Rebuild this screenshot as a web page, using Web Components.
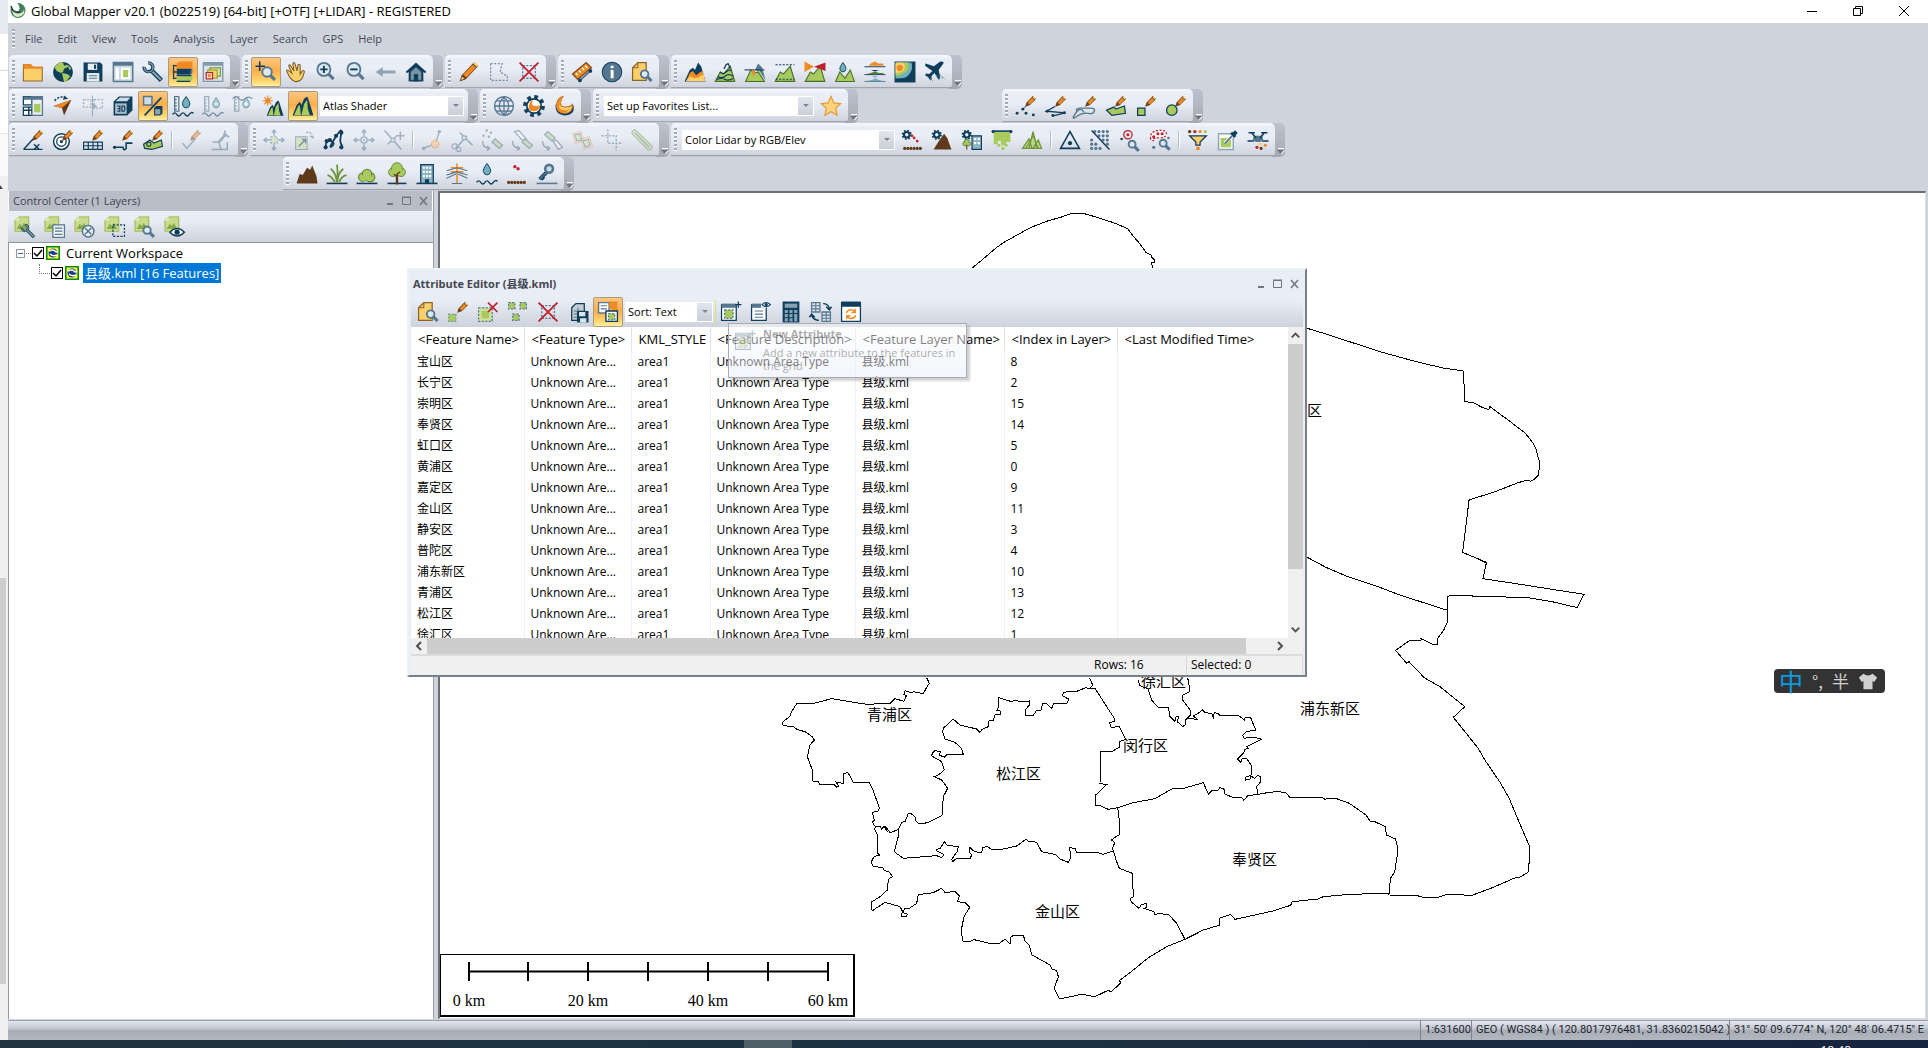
<!DOCTYPE html>
<html lang="en">
<head>
<meta charset="utf-8">
<title>Global Mapper</title>
<style>
html,body{margin:0;height:100%}
body{font-family:"Open Sans","Noto Sans CJK SC",sans-serif;font-size:13px;line-height:18px;color:#000;background:#cfd3dc;overflow:hidden}
</style>
</head>
<body>
<gm-app></gm-app>
<script>
const N='#0f3d5c',B='#55778f',G='#a9ca5c',O='#ef8a25',Y='#fbd06a',L='#cfdbe2',K='#5f3a1a',R='#c0202e',T='#6fb1bd';
const f=(d,c)=>`<path d="${d}" fill="${c}"/>`;
const s=(d,c=N,w=1.4,fill='none',x='')=>`<path d="${d}" fill="${fill}" stroke="${c}" stroke-width="${w}" ${x}/>`;
const c=(x,y,r,fill=N,st='none',w=1)=>`<circle cx="${x}" cy="${y}" r="${r}" fill="${fill}" stroke="${st}" stroke-width="${w}"/>`;
const dots=(a,fill,r=1.1)=>a.map(([x,y])=>c(x,y,r,fill)).join('');
const dash='stroke-dasharray="2 1.4"';
const pen=f('M9.2 10.8l1.3-4.2L16.4.4l3.2 3-6 6z','#70441c')+f('M11.6 6.6l4.2-4.4 2.1 2-4.2 4.4z',O)+f('M16.4 1.8l.9-.8 2 1.9-.8.9z',Y);
const mag=(x,y,r=3.4)=>s(`M${x+r*.7} ${y+r*.7}L${x+r+3} ${y+r+3}`,B,3)+c(x,y,r,'#dce9ef',B,1.8);
const gear=(x,y,r,col)=>c(x,y,r*.65,'none',col,r*.5)+`<circle cx="${x}" cy="${y}" r="${r}" fill="none" stroke="${col}" stroke-width="${r*.45}" stroke-dasharray="${r*.4} ${r*.385}"/>`;
const drop=(x,y,k=1)=>s(`M${x} ${y}q${-4*k} ${5*k} ${-3*k} ${7.5*k}a${3.1*k} ${3.1*k} 0 0 0 ${6*k} 0q${1*k} ${-2.5*k} ${-3*k} ${-7.5*k}z`,N,.9,T);
const wave=s('M0 18q2-3 4 0t4 0 4 0 4 0 4-1',N,1.3);
const ruler=s('M2 1h4v14H2zM2 4h2M2 7h2M2 10h2M2 13h2',B,1.2,'#e8eef2');
const mt=f('M0 19L4 9l3-3 1.500 3L11 3l3-2 1 2 5 16z',N)+f('M1.500 18.500L5.500 10l1.500-1 1 9.500zM8.500 18.500L11 8l3-4 1 14.500z',G)+f('M10 18.500l1.500-8 3 2 2 6z',G);
const gm=s('M.7 19l4.8-9 3 2 3.5-4 3-3.5 4.3 14.500z','#46702c',1.1,G);
const brown=f('M0 19l3-9 3 1 4-7 3 2 2-4 4 10 1 7z',K);
const grid=s('M1 12h18v7H1zM5.500 12v7M10 12v7M14.500 12v7M1 15.500h18',N,1.1);
const cross=s('M1 1l18 18M19 1L1 19',R,1.7);
const dsq=(x,y,w,fill='none',col=B)=>`<rect x="${x}" y="${y}" width="${w}" height="${w}" fill="${fill}" stroke="${col}" stroke-width="1.2" ${dash}/>`;
const page=f('M4 0h10v14H0V4z','#c9dc8d')+s('M.5 14V4l4-3.500h9V14z','#a3ba62',1)+f('M4 .5V4H.5z','#e6efc6')+f('M2 12l3-5 2 2 2-3 3 6z','#88a84a');
const tree=(x,y,k=1)=>s(`M${x} ${y+10*k}V${y}`,K,1.8*k)+c(x-3*k,y+1*k,3.2*k,G,'#55803a',.8)+c(x+3*k,y+1*k,3.2*k,G,'#55803a',.8)+c(x,y-2*k,4*k,G,'#55803a',.8)+f(`M${x-4*k} ${y-1*k}h${8*k}v${3.500*k}h${-8*k}z`,G);
const bld=s('M10 6h9v13h-9z',N,1.1,'#8db4c4')+f('M12 8h2v2h-2zM15.500 8h2v2h-2zM12 12h2v2h-2zM15.500 12h2v2h-2z','#fff');
const arr4=s('M10 1v5M10 14v5M1 10h5M14 10h5M8 3l2-2.500L12 3M8 17l2 2.500 2-2.500M3 8L.5 10 3 12M17 8l2.500 2L17 12',B,1.4);
const rot=s('M1 11q0 7 7 7M8 18l-3-2M8 18l-3 2',B,1.3);
const slab=(x,y)=>s(`M${x} ${y}l3-3 7 6-3 3z`,B,1.2,'#b9d588');
const win=s('M1 3h14v15H1z',N,1.2,'#fff')+f('M1 2h14v4H1z',B);
const doc=s('M4 6l4-4h8v16H4z',N,1.2,'#c4ccd2')+s('M6 9h9M6 12h9M6 15h9M10 6v12',B,1);
const wr=s('M8.500 8.500L18 18',N,4.400)+s('M8 8l9.500 9.500','#8ba3b2',2)+s('M1.500 5a4.200 4.200 0 1 0 4-3.700',N,3.200)+s('M1.700 5.200a4.200 4.200 0 1 0 4-3.700','#7d98a8',1.400);
const ICON={
folder:s('M.8 18.500V3h7l2 2.500h9v13z','#8d6428',1,Y)+f('M1 2.500h7l2 2.500h9v2H1z',O),
globe:c(10,10,9.500,N)+f('M3 4Q7 0 10 1l1 3 3-1 1 2-4 2-1 3-2 1-4-2-2-3zM9 11l5 1 3 2-4 5-2 .5-1-4z',G)+f('M15 3l3 4-2 1-1-3z',G),
save:f('M1 1h16l2 2v16H1z',N)+f('M5 2h9v6H5z','#e7eef2')+f('M11 3h2v4h-2z',N)+f('M4 11h12v8H4z','#e7eef2')+s('M6 13.500h8M6 16h8',B,1),
layout:s('M.8 1h18.500v18H.8z',B,1.4,'#cdd9df')+f('M1 1h18v3H1z',B)+f('M3 6h3v11H3zM8 6h9v11H8z','#fff')+f('M10 8h5v7h-5z',G),
wrench:wr,
layers:s('M1 3v14M1 4h4M1 10h3M1 16h3',N,1.200)+f('M4 2l3-2h12v6l-2 1H4z',O)+f('M4 9l15-2v4l-2 2H4z',B)+f('M4 8h13v4H4z',N)+f('M4 15l15-2v4l-2 2H4z',G)+s('M4 7.500h14M4 13.500h14M4 19h13',N,1.200),
overlay:s('M.8 1h18.500v18H.8z','#8299a8',1.300,'#dbe3e8')+f('M1 1h18v3H1z','#8299a8')+s('M7 6h10v8H7z','#7c9c36',1.200,'#dcebb4')+s('M5 8h9v8H5z','#7c9c36',1,Y)+s('M3.500 10.500h6v6h-6z',R,1.200,'#fff')+f('M5 12h3v3H5z',O),
zoomsel:s('M4 0v9M0 4.500h9',N,1.500)+mag(11,10,4.500),
hand:s('M2 11q-2-3 0-3l4 3-3-7q1-2 2 0l3 5-1-7q1-2 2 0l2 7 1-6q2-1 2 1v8l2-3q2-1 2 1l-2 6q-3 4-7 3-4-1-7-8z','#7a5a2c',1,Y),
zin:mag(8,7.500,6.200)+s('M8 4v7M4.500 7.500h7',N,1.800), zout:mag(8,7.500,6.200)+s('M4.500 7.500h7',N,1.800),
back:f('M0 10l7-4.500v3h12v3H7v3z','#8fa3b1'),
home:f('M10 1l10 9-1.500 1L17 10v9H3v-9l-1.500 1L0 10z',N)+s('M4.500 10L10 5l5.500 5v8h-11z',N,.8,'#7694a6')+f('M8 12h4v7H8z',N),
pencil:f('M1 19l2-6L14.500 1l4 3.500L7 17z','#70441c')+f('M4.500 12.500l9-9.500 3 2.700-9 9.600z',O)+f('M2.500 17.500l1-3 2 2z','#f5dca5')+f('M14 2l2-1.300 2.500 2.300L17 5z',Y),
digsel:s('M2 2h11l-2 8 7 4v4H2z','#7a93a8',1.200,'none',dash), delx:dsq(4,4,12)+cross,
ruler:s('M1 12L14 1l5 5L6 17z','#7a4a1a',1.200,O)+s('M4 11l2 2M7 8.500l2 2M10 6l2 2M13 4l2 2','#fff',1.300)+s('M8 18l10-9',B,1.800)+c(8,18,1.800)+c(18,9,1.800),
info:c(10,10,9.300,B,N,1)+f('M8.700 8h2.800v8H8.700zM8.700 4h2.800v2.500H8.700z','#fff'),
docsearch:s('M1 18V6l5-5h8v17z','#8d6428',1.200,Y)+s('M1 6h5V1','#8d6428',1)+mag(12.500,12,3.600),
t1:f('M0 19L5 8l3-2 2 2 3-7 3 4 4 14z',N)+f('M1.500 18.500L5 11l3-2 3 4 4-3 2-1 2.500 9.500z',O)+f('M1.200 18.800l4.300-4.800 4 2 4-1 4.500-3 1.800 6.800z',Y),
t2:gm+s('M5 10q3 3 6 0t5-1M3 14q4 3 7 0t8 0M2 17q5-2 8 0t8-1M9 7l2-4 2-1 2 5',N,1.200),
t3:f('M10 8l3-6 4 4 3 12-5-8z',B)+f('M1 19L6 8l4 4 4-4 5 11z',G)+s('M1 19L6 8l3 3 4-1 6 9z','#46702c',1)+s('M0 8h19',N,1)+f('M6.500 8.500h4L8.500 15z',O),
t4:gm+s('M1 3h18M1 17h18',N,1,'none',dash),
t5:gm+f('M0 0l9 5-9 5z',O)+f('M9 5l11-4v8z',R),
t6:s('M1 19L5 10l5 6 5-8 4 11z','#46702c',1,G)+drop(8,1,.9),
t7:f('M1 4h3l2-2 4-2 3 2h5v2z',O)+s('M0 5h20',N,.9)+f('M6 8h8l-4 1.500z',N)+f('M2 12l4-1 4-1.500 4 1.500h4v1z','#5c7a3a')+s('M0 12.500h20',N,.9)+f('M7 14h6l-3 1.500z',T)+f('M3 18.500l5-1 2-1.500 3 1.500 4 1z',T)+s('M0 19h20',B,.9),
t8:f('M0 0h20v20H0z',N)+f('M1 1h15q2 5-1 10t-9 5-5 1z',T)+f('M1 1h12q2 6-2 9t-10 4z',G)+f('M1 2q9-3 9 3t-9 6z',Y)+c(5,6,3,O),
t9:f('M1 2l8 2.500L15 0q4-.5 3 2l-4.500 6 1.500 8-1.500 1.500-4-6.500-3 3 .5 3-1.500 1-2-3-3-2 1-1.500 3 .5 3-3L.5 4z',N)+s('M11 13l5 5M14 12l5 5M5 16l3 3',B,1,'none',dash),
panels:s('M.8 1h8v8h-8zM.8 11h8v8h-8z',N,1.200,'#fff')+s('M9 1h10v18H9z',B,1.200,'#e8eef2')+f('M9 1h10v3H9zM1 1h8v3H1z',B)+f('M11 8h6v8h-6z',G)+s('M1 14h8M6 11v8',N,1.400),
north:f('M18 4L11 19l-2-7-8-2z',K)+f('M18 4l-9 8-8-2z',O)+s('M2 5q4-5 10-3',N,1.500,'none',dash)+f('M11 0l4 3-5 1z',N),
split:dsq(1,4,7)+dsq(11,4,8)+f('M9 7l5 3-5 4z',B)+s('M9.500 0v20',B,1),
cube:f('M1 6l5-5h13v13l-5 5H1z',N)+f('M3 5.500l4-3.500h10l-3 3.500z',L)+f('M2.500 7.500h11v10h-11z','#a7bac6')+s('M4.500 10h2.500v5H4.500M5 12.500h2M9 10h2l1 2.500L11 15H9z',N,1.100),
togg:s('M1 1h8v8H1z',B,1.400,L)+s('M2 19L18 2',N,1.600)+f('M11 12l2-2h6v7l-2 2h-6z',N)+f('M12 13h5v5h-5z','#8ba5b5'),
w1:ruler+drop(13,1,1.100)+wave, w2:ruler+drop(13,2)+s('M11 8h4','#fff')+wave,
w3:ruler+drop(13,2)+s('M0 3q3-3 6 0t6 0 7 0',N,1.200)+s('M11 8h4M13 6v4','#fff'),
sunmt:`<g transform="translate(4 4) scale(.8 .8)">${mt}</g>`+c(5,5,2.500,O)+s('M5 0v10M0 5h10M1.500 1.500l7 7M8.500 1.500l-7 7',O,1),
mt,
wire:c(10,10,9,'none',B,1.300)+s('M10 1v18M1 10h18M2.500 5h15M2.500 15h15M10 1Q1 10 10 19M10 1q9 9 0 18',B,1.200),
gearm:gear(10,10,8.500,N)+c(10,10,6,'#fff')+f('M9 4q-3 6 3 6 4 0 4-2 0 7-6 7T5 10t4-6z',O), moon:f('M2 8q3 8 10 6 6-2 7-5 2 10-9 10Q1 18 2 8z',N)+s('M9 1q-6 10 2 10 6 0 7-3 1 9-8 9-8-1-7-9 1-6 6-7z','#c06a16',1,Y)+f('M9 1q-3 5-1 8-3-1-3 2 3 5 11 2-5 5-11 2-5-9 4-14z',O),
star:s('M10 .8l2.800 6.200 6.500.7-4.900 4.500 1.500 6.800-5.900-3.500-5.900 3.500 1.500-6.800L.7 7.700 7.200 7z','#e59a3a',1.100,'#fdd37c'),
d1:pen+s('M1 19h18M1 19L10 9M11 14l5 5M16 14l-5 5',N,1.300), d2:c(8.500,11.500,7.500,'#fff',N,1.400)+c(8.500,11.500,4.500,'none',N,1.200)+c(8.500,11.500,1.500)+pen, d3:grid+pen,
d4:s('M1 17h9q0 4 3 1V13h6',N,1.500)+c(2,17,1.600)+pen, d5:s('M1 14l6-4 4 3 7-3 1 6-10 3-7-1z',N,1.100,G)+c(6,14,2,'none',N)+pen,
d6:s('M2 13l4 5 8-9',B,1.400)+pen, d7:s('M2 12h6l2 7H1M16 12v7H8',B,1.400)+s('M8 12l7-8',B,2.600)+s('M14 1l-1 4 5 2',B,1.600),
mv:arr4+dsq(7,7,6,'#cfe19a'), sc:s('M2 7h11v12H2z',B,1,'#cfe19a')+s('M5 16l6-6M8 9.500h3.500V13',N,1.400)+s('M12 3q5-2 6 5M16 6l2 2.500 2-2.500',B,1.300,'none',dash),
curve:s('M2 17q0-8 5-6t1 5 3-8 6-5-1 8 2 5',N,1.700)+dots([[2,17],[6,10],[3,11],[17,3],[17,17],[12,6]],N,2),
mv2:arr4+c(10,10,3,'none',B,1.300)+c(10,10,1,B), vx:s('M1 1l16 18M4 14l9-8M16 2v8M12 6h8',B,1.400)+c(9,10,2,L,B),
v1:s('M1 18l12-4 4-12',B,1.300)+c(13,14,3.500,'#f9c28a',O)+c(17,2,1.600,B)+c(2,18,1.600,B), v2:s('M4 18L15 6M8 3l12 12',B,1.500)+c(3,16,2.500,'none',B)+c(7,19,2,'none',B)+c(12,8,2,L,B),
e1:dots([[5,1],[9,3],[2,6],[7,7]],B,1.200)+rot+slab(10,12),e2:s('M3 2l4-1 7 8-4 1z',B,1.200,'#fff')+rot+slab(10,12),e3:slab(3,5)+rot+s('M11 11l3-1 6 7-4 2z',B,1.200,'#fff'),
e4:s('M1 4l8-2 3 9-8 2zM9 9l8-2 3 9-8 3z','#eeb27e',1.200,'#fff')+s('M3 5l5-1 2 6-5 1zM11 11l5-2 2 6-5 2z',B,1,'#cfe19a'),
e5:s('M6 0v13h14M0 6h14v14',B,1.400,'none',dash),e6:s('M3 3l14 14','#7a944e',6,'none','stroke-linecap="round"')+s('M3 3l14 14','#c9dfa0',4,'none','stroke-linecap="round"')+s('M3 3l14 14',B,1.200),
g1:brown,g2:s('M0 19h20',N,1.500)+s('M10 18Q9 9 4 5M10 18Q11 8 10 1M10 18q1-9 6-13M8 18q-3-6-7-7M12 18q2-6 7-7','#6d9438',1.700),
g3:s('M0 19h20',N,1.500)+c(6,13,4,G,'#55803a')+c(13,13,4.500,G,'#55803a')+c(10,10,4.500,G,'#55803a')+f('M5 11h9v5H5z',G),g4:s('M1 19h18',N,1.500)+tree(10,7,1.300)+s('M10 18v-8l3-2M10 13L7 10',K,1.300),
g5:s('M0 19h20',N,1.500)+s('M4 1h12v18H4z',N,1.200,'#8db4c4')+f('M6 3h2v2H6zM9 3h2v2H9zM12 3h2v2h-2zM6 7h2v2H6zM9 7h2v2H9zM12 7h2v2h-2zM6 11h2v2H6zM9 11h2v2H9zM12 11h2v2h-2z','#fff')+f('M8 15h4v4H8z',N),
g6:s('M10 0v19M4 4h12M4 8h12',O,1.500)+s('M0 7l10-3 10 3M0 11l10-3 10 3M0 14l9-4M20 14l-9-4M5 19h10',B,1),
g7:drop(10,0,1.100)+wave,g8:c(8,3,1.600,R)+c(11,5,1.600,R)+dots([[2,18],[5,18],[8,18],[11,18],[14,18],[17,18]],K,1.500),
g9:s('M0 19h20',B,1.500)+s('M3 15l8-8M5 13l2 2',N,3.500)+s('M3 15l8-8',B,1.500)+c(12,5,3.700,L,B,2.500),
l1:gear(5,5,4,N)+dots([[12,8],[15,11],[10,6]],R,1.300)+dots([[3,18],[6,18],[9,18],[12,18],[15,18],[18,18]],K,1.500),
l2:f('M2 19l5-8 5-7 3 4 4 11z',K)+gear(5,5,4,N),l3:gear(5,5,4,N)+bld+tree(5,13,.6),
l4:f('M2 2h16v10h-4v3H9v-4H6v3H2z',G)+s('M1 1.500h18',N,1.500)+dots([[1.500,2],[18.500,2]],N,1.500)+dots([[7,15],[11,18],[14,15]],G,1.500),
l5:s('M1 18l6-9 3 9zM7 18l4-16 4 16zM11 18l5-8 3 8z','#6d9438',1.200,'#bcd586')+s('M4 18l7-12 5 12','#6d9438',1),
l6:s('M10 2l9 16H1z',N,1.500)+c(10,13,2),l7:dots([[5,2],[9,2],[13,2],[17,2],[9,6],[13,6],[17,6],[13,10],[17,10],[17,14],[2,10],[2,14],[6,14],[2,18],[6,18],[10,18]],B,1.500)+s('M2 1l17 18',N,1.300),
l8:c(8,5,4,'none',R,1.200)+c(8,5,1.500,R)+c(2,9,1.200,N)+mag(12,14,3.300),l9:s('M1 9Q0 2 8 1t8 3-7 4-5 3z',R,1.200,'#fff',dash)+dots([[4,7],[8,4],[12,4]],R,1.500)+c(4,17,1.500,B)+c(18,8,1.200,B)+mag(13,13,3.300),
fl:c(2,2,1.600,K)+c(7,2,1.600,R)+c(12,2,1.600,O)+c(17,2,1.600,G)+s('M2 6h16l-6 6v3H8v-3z',N,1.200,Y)+c(10,18,1.800,O),
eye1:s('M1 4h14v15H1z','#8ba5b5',1.400,'#fff')+f('M3 8h10v9H3z',G)+s('M7 13l7-7','#fff',3)+s('M7 13.500l7-7.500',B,1.800)+s('M13 3l4 4',N,2.600)+s('M15 5l3-3',N,3.600),
drone:f('M6 6h8l1 4-3 2H8l-3-2z',B)+s('M1 3h6M13 3h6M0 11h6M14 11h6M4 3l4 5M16 3l-4 5',N,1.500)+c(9,17,1.500,R)+c(13,18,1.500,K)+c(17,15,1.500,O)+c(12,14,1.500,Y),
a1:s('M8 12l2-2',B,1)+pen+dots([[1.500,17],[7,13],[10,17],[17,18.500]],N,1.400),a2:s('M9 10.500L1 15l18 1.500-12 3',N,1.300)+dots([[1.500,15],[18,16.500],[7,19]],N,1.400)+pen,
a3:s('M1 15q-1-3 4-3h9q5 0 4 3t-6 2-11 3-1-3 8-1',B,1.300)+pen,a4:s('M1 14l7-3 2 2 8-3 1 7-13 2z',N,1.200,G)+pen,a5:s('M2 12h7v7H2z',N,1.200,G)+pen,a6:c(6,14,5,G,N,1.200)+pen,
p1:page+`<g transform="translate(6 7) scale(.7)">${wr}</g>`,p2:page+s('M8 8h11v12H8z',B,1.200,'#f2f5f7')+s('M10 11h7M10 14h7M10 17h7',B,1.200),
p3:page+c(13,14,5.500,'#e9eef3',B,1.400)+s('M10 11l6 6M16 11l-6 6',B,1.400),p4:page+dsq(8,8,11,'none',N),p5:page+mag(12,13,3.500),p6:page+s('M5 15q7-7 14 0-7 7-14 0z',N,1.300,'#fff')+c(12,15,2.500),
q1:dsq(1,12,7,G,'#7b9aa0')+pen,q2:dsq(1,6,13,'#cfe19a')+f('M4 9h7v7H4z',G)+s('M10 1l9 9M19 1l-9 9',R,1.600),
q3:dsq(1,1,6,G)+dsq(12,1,6,G)+dsq(5,12,6,G),q4:doc+f('M9 9h11v11H9z',N)+f('M11 10h6v4h-6zM12 16h6v4h-6z','#dbe5ea'),
q5:s('M1 1h10v10H1z',B,1.300,'#fff')+s('M3 4h6M3 7h6',B,1)+f('M11 0h8v9h-4l-4-4z',O)+s('M8 9h11v10H8z',N,1.300,'#fff')+dsq(10.500,11.500,6,G),
r1:win+dsq(4,8,8,G)+s('M17 0v6M14 3h6',N,1.200),r2:win+s('M4 9h8M4 12h8M4 15h8',B,1.100)+f('M10 0h10v6H10z','#e6ebf4')+s('M11 3q4-4 8 0-4 4-8 0z',N,1)+c(15,3,1.500),
calc:f('M2 0h16v20H2z',N)+f('M4 2h12v4H4z','#86a3b3')+f('M4 8h3v3H4zM8.500 8h3v3h-3zM13 8h3v3h-3zM4 12h3v3H4zM8.500 12h3v3h-3zM13 12h3v7h-3zM4 16h3v3H4zM8.500 16h3v3h-3z','#86a3b3'),
swap:s('M1 1h8v9H1zM11 10h8v9h-8z',B,1.200,'#dbe3e8')+s('M1 4h8M1 7h8M11 13h8M11 16h8M5 1v9M15 10v9',B,1)+s('M12 2q5 0 6 5M15 5l3 3 2-3M8 18q-5 0-7-5M-1 15l2-3 3 3',N,1.400),
refr:s('M1 1h18v18H1z',N,1.200,'#fff')+f('M1 0h18v5H1z',N)+s('M5.500 11q1.500-4 6-3l2 2M14.500 13q-1.500 4-6 3l-2-2M14 7v3.500h-3.500M6 17v-3.500h3.500',O,1.400)
};

const define=(name,css,html)=>customElements.define(name,class extends HTMLElement{
 constructor(){super();this.attachShadow({mode:'open'})}
 connectedCallback(){this.shadowRoot.innerHTML=`<style>:host{display:block;box-sizing:border-box}*{box-sizing:border-box}${css}</style>`+(typeof html==='function'?html(this):html)}
});

define('gm-tool',`:host{display:flex;width:30px;height:30px;flex:none}
button{display:flex;align-items:center;justify-content:center;width:30px;height:30px;padding:0;border:1px solid transparent;background:none}
svg{width:22px;height:22px;overflow:visible}
:host([on]) button{border-color:#a99b7c;background:linear-gradient(#fcc783,#ffae4a 45%,#ffd873 85%,#fff0a8);border-radius:2px}
:host([off]) svg{opacity:.5}`,
 e=>`<button aria-label="${e.getAttribute('icon')}"><svg viewBox="-.5 -.5 21 21">${ICON[e.getAttribute('icon')]}</svg></button>`);

define('gm-tools',':host{display:contents}',e=>e.getAttribute('icons').trim().split(/\s+/).map(n=>n==='|'?'<i></i>':`<gm-tool icon="${n.replace(/[!-]/g,'')}" ${n.endsWith('!')?'on':''} ${n.endsWith('-')?'off':''}></gm-tool>`).join('')+
 '<style>i{width:8px;height:18px;align-self:center;flex:none;background:linear-gradient(90deg,transparent 3px,#b5bac4 3px 4px,#fff 4px 5px,transparent 5px)}</style>');

define('gm-bar',`:host{display:flex;height:34px;flex:none;background:linear-gradient(#bcc3cf,#a6a8b0);border-radius:0 5px 5px 0}
.in{display:flex;align-items:center;padding:0 2px 0 9px;background:linear-gradient(#f4f6fa 0 1px,#e9edf6 4px 14px,#cfd4de 32px,#9fa4ae 32px 33px,#c4c8d0 33px);border-radius:4px 5px 5px 0;position:relative}
.grip{position:absolute;left:3px;top:5px;width:3px;height:23px;background:repeating-linear-gradient(#a5aab5 0 2px,#fff 2px 3px,transparent 3px 4px)}
.h{width:10px;display:flex;align-items:flex-end;justify-content:flex-end;padding-bottom:2px}`,
'<div class="in"><span class="grip"></span><slot></slot></div><div class="h"><svg width="8" height="8"><path d="M1 1.500h6" stroke="#fff"/><path d="M1 3.500h7L4.500 7.500z" fill="#fff"/><path d="M0 3h7L3.500 7z" fill="#6f747e"/></svg></div>');

define('gm-select',`:host{display:grid;height:20px;flex:none;margin:0 2px}
select,svg{grid-area:1/1}
select{appearance:none;width:100%;height:20px;border:1px solid #fff;border-radius:0;background:#fff;padding:0 18px 0 2px;font:11px/18px "Open Sans",sans-serif;color:#000}
svg{justify-self:end;width:15px;height:18px;margin:1px;background:linear-gradient(#e1e6ef,#c9ced8);pointer-events:none}`,
e=>`<select aria-label="${e.getAttribute('value')}"><option>${e.getAttribute('value')}</option></select><svg><path d="M5 7h6l-3 3z" fill="#80848c"/></svg>`);

define('gm-winbtns',`:host{display:flex;gap:6px;margin-left:auto}button{width:11px;height:14px;padding:0;border:0;background:none;display:flex}svg{overflow:visible}`,
'<button aria-label="minimize"><svg width="11" height="14"><path d="M3 10h6" stroke="#70747c" stroke-width="2"/></svg></button><button aria-label="maximize"><svg width="11" height="14"><path d="M1.500 3.500h8v7h-8zM1 3h9" stroke="#70747c" fill="none"/></svg></button><button aria-label="close"><svg width="11" height="14"><path d="M2 3l7 8M9 3l-7 8" stroke="#70747c" stroke-width="1.500"/></svg></button>');

define('gm-title',`:host{display:flex;align-items:center;height:23px;background:#fff;padding:0 16px 2px 2px}
span{font-size:13px;margin-left:5px;white-space:nowrap}.b{margin-left:auto;display:flex;gap:30px}button{border:0;background:none;padding:0;width:16px;height:16px}svg{display:block}`,
`<svg width="16" height="17" viewBox="0 0 16 17"><circle cx="8" cy="8.500" r="7.500" fill="#3f7f5b"/><path d="M1 3q6-5 8 1t-3 5-5-6z" fill="#fff"/><path d="M2 6q3 7 9 5 3-1 3-5 2 8-6 9-6 0-6-9z" fill="#d9e8c8"/><path d="M1 4q2 8 9 6" stroke="#1b3f35" stroke-width="1.500" fill="none"/></svg><span>Global Mapper v20.1 (b022519) [64-bit] [+OTF] [+LIDAR] - REGISTERED</span>
<div class="b"><button aria-label="minimize"><svg width="16" height="16"><path d="M3 8.500h10" stroke="#000"/></svg></button><button aria-label="restore"><svg width="16" height="16"><path d="M3.500 5.500h7v7h-7zM5.500 5.500v-2h7v7h-2" stroke="#000" fill="none"/></svg></button><button aria-label="close"><svg width="16" height="16"><path d="M3 3l10 10M13 3L3 13" stroke="#000" fill="none"/></svg></button></div>`);

define('gm-menu',`:host{display:flex;align-items:center;height:32px;padding-left:4px}
nav{display:flex;gap:15px;margin-left:10px}button{border:0;padding:0;background:none;font:11px/16px "Open Sans",sans-serif;color:#434a57}
.g{width:3px;height:20px;background:repeating-linear-gradient(#a5aab5 0 2px,#fff 2px 3px,transparent 3px 4px)}`,
'<span class="g"></span><nav>'+['File','Edit','View','Tools','Analysis','Layer','Search','GPS','Help'].map(x=>`<button>${x}</button>`).join('')+'</nav>');

define('gm-dock',`.r{display:flex;gap:2px;height:34px;padding-left:1px}.r4{padding-left:275px}.far{margin-left:142px}`,
`<gm-menu></gm-menu>
<div class="r"><gm-bar><gm-tools icons="folder globe save layout wrench layers! overlay"></gm-tools></gm-bar><gm-bar><gm-tools icons="zoomsel! hand zin zout back home"></gm-tools></gm-bar><gm-bar><gm-tools icons="pencil digsel delx"></gm-tools></gm-bar><gm-bar><gm-tools icons="ruler info docsearch"></gm-tools></gm-bar><gm-bar><gm-tools icons="t1 t2 t3 t4 t5 t6 t7 t8 t9"></gm-tools></gm-bar></div>
<div class="r"><gm-bar><gm-tools icons="panels north split- cube togg! w1 w2- w3- sunmt mt!"></gm-tools><gm-select value="Atlas Shader" style="width:144px"></gm-select></gm-bar><gm-bar><gm-tools icons="wire gearm moon"></gm-tools></gm-bar><gm-bar><gm-select value="Set up Favorites List..." style="width:210px"></gm-select><gm-tools icons="star"></gm-tools></gm-bar><gm-bar class="far"><gm-tools icons="a1 a2 a3 a4 a5 a6"></gm-tools></gm-bar></div>
<div class="r"><gm-bar><gm-tools icons="d1 d2 d3 d4 d5 | d6- d7-"></gm-tools></gm-bar><gm-bar><gm-tools icons="mv- sc- curve mv2- vx- | v1- v2- e1- e2- e3- e4- e5- e6-"></gm-tools></gm-bar><gm-bar><gm-select value="Color Lidar by RGB/Elev" style="width:213px"></gm-select><gm-tools icons="l1 l2 l3 l4 l5 | l6 l7 l8 l9 | fl eye1 drone"></gm-tools></gm-bar></div>
<div class="r r4"><gm-bar><gm-tools icons="g1 g2 g3 g4 g5 g6 g7 g8 g9"></gm-tools></gm-bar></div>`);

const tick='<svg viewBox="0 0 12 12"><path d="M2 6l3 3 5-6" stroke="#000" stroke-width="1.500" fill="none"/></svg>';
const kml='<svg class="k" viewBox="0 0 14 14"><path d="M.8.8h12.400v12.400H.8z" fill="#ff3" stroke="#0a8a1a" stroke-width="1.600"/><circle cx="7" cy="7" r="4.500" fill="#1c3f8f"/><path d="M3 5q4-2 6 0t3 0M4 8q3 3 7 1" stroke="#fff" stroke-width="1.500" fill="none"/></svg>';
define('gm-control',`:host{display:flex;flex-direction:column;width:426px;flex:none;background:#fff;border-right:1px solid #9b9ea6}
.t{display:flex;align-items:center;height:20px;background:#b8bdc7;color:#3f4552;font-size:11px;padding:0 3px 0 4px;margin:0 1px}
.tb{display:flex;height:32px;flex:none;background:linear-gradient(#e9edf6 30%,#cdd2dc);border-bottom:1px solid #93979f;align-items:center;padding-left:2px}
.tree{padding:0 7px;flex:1;border-left:1px solid #93979f}
.row{display:flex;align-items:center;height:20px;gap:1px}
.row.c{margin-left:27px}
input{appearance:none;width:12px;height:12px;margin:0;border:1px solid #000;background:#fff}
label{display:flex;align-items:center;gap:2px}
.cb{display:grid}.cb>*{grid-area:1/1;width:12px;height:12px}.cb svg{pointer-events:none}
.k{width:14px;height:14px}
.ex{width:9px;height:9px;border:1px solid #8d98a8;display:flex;align-items:center;justify-content:center}.ex:after{content:"";width:5px;height:1px;background:#3b5a96}
.dt{width:5px;border-top:1px dotted #777}.c .dt{width:11px;height:10px;border-left:1px dotted #777;border-top:0;border-bottom:1px dotted #777;margin:0 0 8px -4px}
b{font-weight:400;padding:0 2px;margin-left:2px;font-size:13px;line-height:20px;white-space:nowrap}.c b{background:#0078d7;color:#fff}`,
`<div class="t"><span>Control Center (1 Layers)</span><gm-winbtns></gm-winbtns></div><div class="tb"><gm-tools icons="p1 p2 p3 p4 p5 p6"></gm-tools></div>
<div class="tree"><div class="row"><span class="ex"></span><span class="dt"></span><label><span class="cb"><input type="checkbox" checked>${tick}</span>${kml}<b>Current Workspace</b></label></div>
<div class="row c"><span class="dt"></span><label><span class="cb"><input type="checkbox" checked>${tick}</span>${kml}<b>县级.kml [16 Features]</b></label></div></div>`);

const Z=(x,y,sx,sy,...pts)=>`<g transform="translate(${x} ${y}) scale(${sx} ${sy})">${pts.map(p=>`<polyline points="${p}"/>`).join('')}</g>`;
const third=1/3;
define('gm-map',`:host{flex:1;background:#fff;border:2px solid #6c6f74;border-right:1px solid #d9dce2;border-bottom:1px solid #d9dce2;position:relative;overflow:hidden;min-width:0}
svg{display:block;position:absolute;inset:0;width:100%;height:100%}
polyline{fill:none;stroke:#000;stroke-width:1;vector-effect:non-scaling-stroke;shape-rendering:crispEdges}
text{font:15px "Noto Sans CJK SC",sans-serif;dominant-baseline:central}
.sc{position:absolute;left:0;bottom:1px;width:415px;height:63px;background:#fff;border:1px solid #000;border-width:1px 2px 2px 1px}
.sc text{font:16px "Liberation Serif",serif;text-anchor:middle}`,
`<svg><g transform="translate(-440 -193)">${
Z(940,190,680/1568,third,'75,233 95,212 130,173 150,155 175,137 210,112 250,92 278,82 300,72 330,70 365,83 400,98 433,116 445,138 460,160 475,187 487,195 489,203 495,210 495,218 488,219 490,233','847,415 880,428 975,468 1020,487 1095,514 1160,534 1207,543 1210,635 1230,638 1250,652 1265,659 1268,650 1310,690 1350,730 1368,760 1375,780 1383,820 1380,855 1370,868 1362,874 1355,870 1333,878 1280,905 1220,930 1205,1087 1260,1117 1252,1166','847,1102 890,1132 940,1160 1010,1190 1060,1215 1168,1260')
+Z(1180,560,748/1568,third,'630,0 642,10 635,56 700,70 847,103 833,143 780,125 730,113 660,110 565,106 560,112 561,185 553,210 540,235 540,253 530,253 505,235 506,240 480,243 452,271 475,310 480,305 512,353 545,380 597,440 573,472 600,520 625,565 640,602 670,665 690,715 712,790 733,860 731,935 715,950 700,955 655,983 612,1006 560,1003 540,1012 510,1012 495,1006 438,1005','165,703 185,697 205,695 222,698 230,712 298,712 304,718 310,714 330,717 355,730 390,765 398,783 407,784 430,800 433,825 452,837 457,870 450,937 441,955 438,1005','188,1056 232,1036 235,1025 290,1017 300,1010 355,1003 438,1000')
+Z(770,660,third,third,
'470,53 478,70 470,82 460,101 430,95 425,99 405,92 402,103 409,107 402,124 375,116 360,130 290,133 240,125 185,116 135,129 80,131 62,160 60,169 37,187 40,197 70,200 82,209 105,215 127,230 133,240 120,255 112,290 127,330 128,363 145,365 150,375 193,374 200,381 206,379 198,366 222,371 220,340 234,338 250,367 298,369 307,385 328,443 325,453 307,457 313,480 307,487 316,500 330,498 335,508 342,498 352,515 345,497 360,518 384,509',
'316,500 314,508 322,523 323,580 330,585 312,590 304,605 308,618 340,624 343,632 358,636 367,650 355,658 352,690 330,710 303,727 303,740 307,753 313,748 345,727 390,740 398,755 393,768 408,770 412,762 400,758 403,745 418,745 440,730 445,704 490,698 515,685 525,697 555,695 568,707 563,725 585,728 599,742 582,770 574,810 578,843 600,845 612,839 668,852 688,850 705,838 720,851 722,832 730,826 760,826 766,845 778,855 785,884 840,915 846,927 860,932 865,950 853,985 868,1017 935,1003 975,1010 1012,992 1025,994 1053,968 1048,962 1090,930 1135,893 1190,860 1245,838 1300,810 1350,795 1348,775 1382,763 1395,778 1500,755',
'384,509 395,487 405,485 415,460 425,462 437,472 436,482 445,490 460,491 480,485 516,466 520,410 533,385 515,360 493,350 505,345 523,330 515,305 485,288 487,280 495,272 512,275 508,285 523,292 530,285 580,284 575,266 555,247 525,237 518,215 520,205 549,177 570,195 620,207 630,217 636,208 655,200 656,183 670,182 675,165 690,163 690,153 680,152 687,140 686,113 725,125 735,120 753,126 778,123 778,135 766,150 768,168 790,166 800,150 813,150 818,130 828,130 845,145 850,132 890,130 897,118 877,107 880,98 900,93 915,96 948,83 956,87 975,85 1010,140 1035,178 1033,185 1018,187 1023,202 1048,200 1067,238 1048,245 1048,262 1025,275 993,275 990,370 1010,374 975,407 975,436 990,437 1015,448 1043,443 1090,428 1155,416 1205,387 1245,384 1300,368 1315,402 1325,392 1345,390 1350,383 1363,388 1365,402 1385,411 1415,413 1422,421 1432,408 1500,397',
'958,53 968,75 960,86','1043,443 1048,480 1048,525 1038,530 1025,540 1034,548 1028,565 1030,573',
'384,509 386,525 373,575 382,582 400,595 500,587 515,593 522,583 500,573 500,568 510,566 523,545 532,556 565,560 562,574 545,598 549,604 560,595 600,597 605,585 597,575 600,562 610,572 625,577 635,577 638,562 652,560 665,568 700,567 740,558 768,538 775,543 800,547 815,575 855,583 870,597 895,607 903,590 898,563 915,565 920,577 980,577 1000,583 1030,573 1040,605 1048,625 1087,640 1090,710 1080,715 1085,727 1107,745 1115,733 1130,731 1130,742 1122,745 1152,755 1155,765 1165,760 1197,765 1220,790 1245,838',
'1105,60 1108,75 1120,82 1133,85 1145,120 1165,143 1195,143 1200,170 1215,184 1218,170 1225,170 1223,186 1238,200 1246,194 1248,178 1262,165 1260,150 1238,120 1238,105 1258,95 1258,80 1253,53',
'1255,175 1282,178 1270,168 1280,163 1298,150 1305,158 1325,160 1330,172 1333,158 1345,160 1350,168 1380,165 1408,168 1423,180 1426,172 1442,173 1457,210 1430,215 1418,226 1422,235 1450,231 1475,238 1430,260 1435,265 1425,268 1420,280 1403,297 1413,307 1415,297 1430,295 1443,315 1443,345 1427,352 1427,360 1440,358 1442,348 1455,355 1462,346 1470,350 1470,368 1460,380 1463,402')
}${[['青浦区',867,713],['松江区',996,772],['闵行区',1123,744],['金山区',1035,910],['奉贤区',1232,858],['浦东新区',1300,707],['徐汇区',1141,680],['崇明区',1277,409]].map(([t,x,y])=>`<text x="${x}" y="${y}">${t}</text>`).join('')}</g></svg>
<svg class="sc" viewBox="1 1 412 60" style="inset:auto auto 1px 0"><path d="M28 17.500h360M29 8v19M88 8v19M148 8v19M208 8v19M268 8v19M328 8v19M388 8v19" stroke="#000" stroke-width="2"/><text x="29" y="46">0 km</text><text x="148" y="46">20 km</text><text x="268" y="46">40 km</text><text x="388" y="46">60 km</text></svg>`);

const rows=[['宝山区',8],['长宁区',2],['崇明区',15],['奉贤区',14],['虹口区',5],['黄浦区',0],['嘉定区',9],['金山区',11],['静安区',3],['普陀区',4],['浦东新区',10],['青浦区',13],['松江区',12],['徐汇区',1]];
define('gm-table',`:host{height:311px;overflow:hidden;background:#fff;flex:1;min-width:0}
table{border-collapse:collapse;table-layout:fixed;width:100%;font-size:12px}
th{font-size:13px;font-weight:400;text-align:left;height:24px;padding:0 0 0 7px;white-space:nowrap;border-right:1px solid #dfe3e8}
td{height:21px;padding:0 0 0 6px;white-space:nowrap;border-right:1px solid #edf2fa;line-height:18px}th:last-child,td:last-child{border:0}`,
'<table><colgroup>'+[113,107,79,145,149,113].map(w=>`<col style="width:${w}px">`).join('')+'<col></colgroup><thead><tr>'+['<Feature Name>','<Feature Type>','KML_STYLE','<Feature Description>','<Feature Layer Name>','<Index in Layer>','<Last Modified Time>'].map(h=>`<th>${h.replace('<','&lt;')}</th>`).join('')+'</tr></thead><tbody>'+
rows.map(([n,i])=>`<tr><td>${n}</td><td>Unknown Are...</td><td>area1</td><td>Unknown Area Type</td><td>县级.kml</td><td>${i}</td><td></td></tr>`).join('')+'</tbody></table>');

define('gm-scroll',`:host{display:flex;background:#f0f0f0;flex:none}
:host([dir=v]){flex-direction:column;width:15px}:host([dir=h]){height:16px;padding-right:15px}
svg{width:16px;height:16px;flex:none}i{background:#cdcdcd;flex:var(--t)}u{flex:var(--r)}:host([dir=v]) svg{width:15px;height:17px}`,
e=>{const v=e.getAttribute('dir')==='v',a=d=>`<svg viewBox="0 0 16 16"><path d="${d}" fill="none" stroke="#505050" stroke-width="2"/></svg>`;return a(v?'M4 10l4-4 4 4':'M10 4L6 8l4 4')+'<i></i><u></u>'+a(v?'M4 6l4 4 4-4':'M6 4l4 4-4 4')});

define('gm-editor',`:host{position:absolute;left:407px;top:268px;width:900px;background:#e9edf6;border:2px solid #eef1f8;border-right:2px solid #7c7f87;border-bottom:2px solid #7c7f87;padding:1px 2px 1px 2px}
.t{display:flex;align-items:center;height:26px;padding:0 3px 0 2px;font-weight:700;font-size:11px;color:#43474f}
.tb{display:flex;align-items:center;height:30px;background:linear-gradient(#e9edf6 10%,#cdd2dc);padding-left:2px}
.tb i{width:1px;height:24px;background:#dfe07a}
.m{display:flex}.st{display:flex;justify-content:flex-end;height:20px;background:#f0f0f0;border-top:2px solid #dcdcdc;font-size:12px;line-height:18px}
.st span{padding-left:4px;width:116px;border-right:1px solid #d8d8d8}.st span:first-child{width:97px}`,
`<div class="t"><span>Attribute Editor (县级.kml)</span><gm-winbtns></gm-winbtns></div>
<div class="tb"><gm-tools icons="docsearch q1 q2 q3 delx q4 q5!"></gm-tools><gm-select value="Sort: Text" style="width:88px"></gm-select><i></i><gm-tools icons="r1 r2 calc swap refr"></gm-tools></div>
<div class="m"><gm-table></gm-table><gm-scroll dir="v" style="--t:225;--r:52"></gm-scroll></div><gm-scroll dir="h" style="--t:818;--r:26"></gm-scroll>
<div class="st"><span>Rows: 16</span><span>Selected: 0</span></div>`);

define('gm-tip',`:host{position:absolute;left:728px;top:323px;width:239px;height:55px;border:1px solid #a8acb4;background:linear-gradient(rgba(255,255,255,.5),rgba(232,236,247,.5));box-shadow:3px 3px 2px rgba(0,0,0,.18);display:flex;gap:8px;padding:2px 0 0 4px;font-size:11px;line-height:13px;color:rgba(90,90,90,.5)}
p{margin:0}b{display:block;line-height:16px;margin-bottom:4px}gm-tool{opacity:.3;width:22px}`,
'<gm-tool icon="r1"></gm-tool><p><b>New Attribute</b>Add a new attribute to the features in<br>the grid</p>');

define('gm-ime',`:host{position:absolute;right:43px;top:669px;width:111px;height:24px;border-radius:4px;background:#333;color:#d0d0d0;display:flex;align-items:center;gap:9px;padding:0 5px;font:17px/24px "Noto Sans CJK SC",sans-serif}
b{font-weight:400;color:#0b9be8;font-size:24px}span{white-space:nowrap}svg{flex:none}`,
'<b>中</b><span>°,</span><span>半</span><svg width="20" height="19" viewBox="0 0 22 19"><path d="M6 1q5 4 10 0l5 4-3 5-2-1v9H6V9l-2 1-3-5z" fill="#d0d0d0"/></svg>');

define('gm-status',`:host{display:flex;justify-content:flex-end;height:20px;font:11px/20px Roboto,sans-serif;color:#22262d;background:linear-gradient(#9da1aa 0 1px,#e3e6ec 1px,#c6cad5 8px,#a8acb6 11px,#b3b8c0)}
span{border-left:1px solid #80848c;padding-left:4px;white-space:nowrap}`,
`<span style="width:51px">1:631600</span><span style="width:258px">GEO ( WGS84 ) ( 120.8017976481, 31.8360215042 )</span><span style="width:199px">31° 50' 09.6774" N, 120° 48' 06.4715" E</span>`);

define('gm-edge',`:host{display:flex;flex-direction:column;width:8px;background:#f0f0f0}
div{flex:none}.a{height:34px;background:#e5eaee}.b{height:142px;background:linear-gradient(#fff 36px,#d9dde0 36px 37px,#fff 37px 99px,#e3e6e9 99px 100px,#fafafa 100px)}.c{height:402px}.d{flex:1;width:6px;background:#cdcdcd}.e{height:56px}svg{display:block;margin-top:8px}`,
'<div class="a"></div><div class="b"></div><div class="c"><svg width="4" height="5"><path d="M-3 5L0 1l3 4z" fill="#444"/></svg></div><div class="d"></div><div class="e"></div>');

define('gm-task',`:host{grid-column:1/-1;height:8px;background:linear-gradient(90deg,#21353f,#1c3142 55%,#17233f);display:flex;overflow:hidden;color:#fff;font-size:12px;line-height:16px}
i{margin-left:744px;width:48px;background:#4e5d66}time{margin:3px 77px 0 auto}`,'<i></i><time>18:48</time>');

define('gm-app',`:host{display:grid;grid-template:minmax(0,1fr) 8px/8px minmax(0,1fr);height:100vh;position:relative;overflow:hidden}
.app{display:flex;flex-direction:column;min-width:0}.work{display:flex;flex:1;min-height:0;gap:4px;padding:0 2px 1px 0}`,
'<gm-edge></gm-edge><div class="app"><gm-title></gm-title><gm-dock></gm-dock><div class="work"><gm-control></gm-control><gm-map></gm-map></div><gm-status></gm-status></div><gm-task></gm-task><gm-editor></gm-editor><gm-tip></gm-tip><gm-ime></gm-ime>');
</script>
</body>
</html>
